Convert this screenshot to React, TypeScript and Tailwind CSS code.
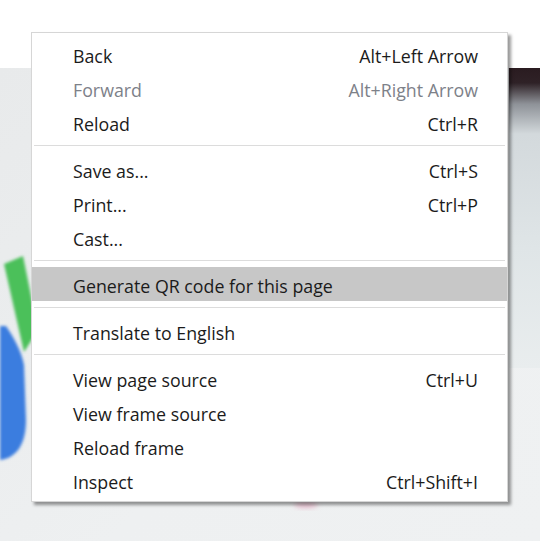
import React from "react"

type Item = { label: string; shortcut?: string; disabled?: boolean; active?: boolean }

const groups: Item[][] = [
  [
    { label: "Back", shortcut: "Alt+Left Arrow" },
    { label: "Forward", shortcut: "Alt+Right Arrow", disabled: true },
    { label: "Reload", shortcut: "Ctrl+R" },
  ],
  [
    { label: "Save as...", shortcut: "Ctrl+S" },
    { label: "Print...", shortcut: "Ctrl+P" },
    { label: "Cast..." },
  ],
  [{ label: "Generate QR code for this page", active: true }],
  [{ label: "Translate to English" }],
  [
    { label: "View page source", shortcut: "Ctrl+U" },
    { label: "View frame source" },
    { label: "Reload frame" },
    { label: "Inspect", shortcut: "Ctrl+Shift+I" },
  ],
]

function MenuRow({ item }: { item: Item }) {
  return (
    <div
      className={`flex h-[34px] items-center justify-between pl-[41px] pr-[29px] pt-[5px] ${
        item.active ? "bg-[#c7c7c7]" : ""
      } ${item.disabled ? "text-[#7d8189]" : "text-[#1b1b1b]"}`}
    >
      <span>{item.label}</span>
      {item.shortcut && <span>{item.shortcut}</span>}
    </div>
  )
}

function Backdrop() {
  // blurry photo behind the menu
  return (
    <svg viewBox="0 0 540 473" className="block h-full w-full" preserveAspectRatio="none">
      <defs>
        <linearGradient id="base" x1="0" y1="0" x2="1" y2="1">
          <stop offset="0" stopColor="#e8eaeb" />
          <stop offset="0.6" stopColor="#eef0f1" />
          <stop offset="1" stopColor="#eff1f2" />
        </linearGradient>
        <linearGradient id="dark" x1="0" y1="0" x2="0" y2="1">
          <stop offset="0" stopColor="#2a1b20" />
          <stop offset="0.05" stopColor="#2f2227" />
          <stop offset="0.12" stopColor="#8e9298" />
          <stop offset="0.22" stopColor="#d3d9dc" />
          <stop offset="0.6" stopColor="#dfe5e7" />
          <stop offset="1" stopColor="#e9edee" />
        </linearGradient>
        <filter id="soft" x="-50%" y="-50%" width="200%" height="200%">
          <feGaussianBlur stdDeviation="1.4" />
        </filter>
        <filter id="softer" x="-50%" y="-50%" width="200%" height="200%">
          <feGaussianBlur stdDeviation="2.5" />
        </filter>
      </defs>
      <rect x="0" y="0" width="540" height="473" fill="url(#base)" />
      <rect x="509" y="0" width="31" height="300" fill="url(#dark)" />
      <polygon points="4,196 23,188 38,262 24,284" fill="#4cc05a" filter="url(#soft)" />
      <path
        d="M0 258 L6 258 C14 270 21 282 24 297 L26 352 C26 377 16 390 0 392 Z"
        fill="#3b7ddf"
        filter="url(#soft)"
      />
      <ellipse cx="306" cy="437" rx="12" ry="3" fill="#e39ab6" opacity="0.6" filter="url(#softer)" />
    </svg>
  )
}

export default function App() {
  return (
    <div
      className="relative flex h-[541px] w-[540px] flex-col overflow-hidden bg-white text-[17.8px]"
      style={{ fontFamily: '"Open Sans", "Noto Sans", sans-serif' }}
    >
      <div className="h-[68px] bg-white" />
      <div className="flex-1">
        <Backdrop />
      </div>

      {/* context menu */}
      <div className="absolute left-[31px] top-[32px] w-[477px] border border-[#d6d6d6] bg-white py-1 shadow-[3px_3px_3px_rgba(0,0,0,0.4)]">
        {groups.map((group, gi) => (
          <div key={gi}>
            {gi > 0 && <div className="mx-[2px] my-[6px] h-px bg-[#dcdcdc]" />}
            {group.map((item) => (
              <MenuRow key={item.label} item={item} />
            ))}
          </div>
        ))}
      </div>
    </div>
  )
}
